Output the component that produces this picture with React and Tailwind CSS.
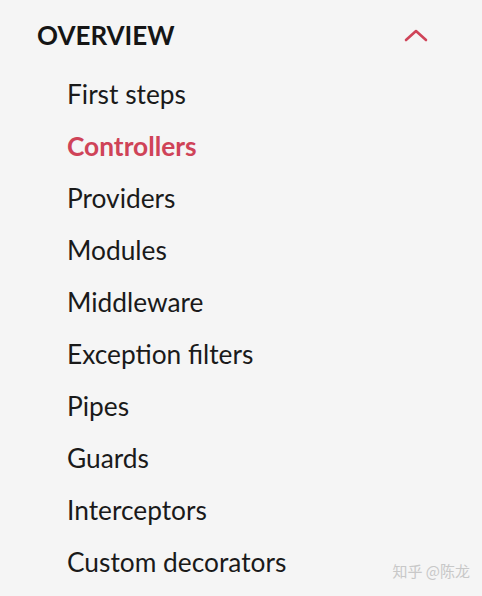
import React from 'react';

const items = [
  'First steps',
  'Controllers',
  'Providers',
  'Modules',
  'Middleware',
  'Exception filters',
  'Pipes',
  'Guards',
  'Interceptors',
  'Custom decorators',
];

const App = () => (
  <div className="relative w-[482px] h-[596px] bg-[#f5f5f5] overflow-hidden" style={{ fontFamily: 'Lato, "Noto Sans", sans-serif' }}>
    <div className="flex items-center justify-between pl-[37px] pr-[54px] pt-[2px] h-[68px]">
      <span className="text-[26px] font-bold text-[#151515] leading-none">OVERVIEW</span>
      <svg width="24" height="14" viewBox="0 0 24 14" fill="none">
        <path d="M2 12 L12 3 L22 12" stroke="#cf4358" strokeWidth="2.6" strokeLinecap="round" strokeLinejoin="round" />
      </svg>
    </div>
    <ul className="flex flex-col pl-[67px]">
      {items.map((it) => (
        <li
          key={it}
          className={`h-[52px] flex items-center text-[26.3px] leading-none ${it === 'Controllers' ? 'font-bold text-[#cf4358]' : 'text-[#1a1a1a]'}`}
        >
          {it}
        </li>
      ))}
    </ul>
    <div className="absolute right-[12px] bottom-[14px] text-[15px] text-[#c8c8c8]" style={{ fontFamily: '"Noto Sans CJK SC", sans-serif' }}>
      知乎 @陈龙
    </div>
  </div>
);

export default App;
